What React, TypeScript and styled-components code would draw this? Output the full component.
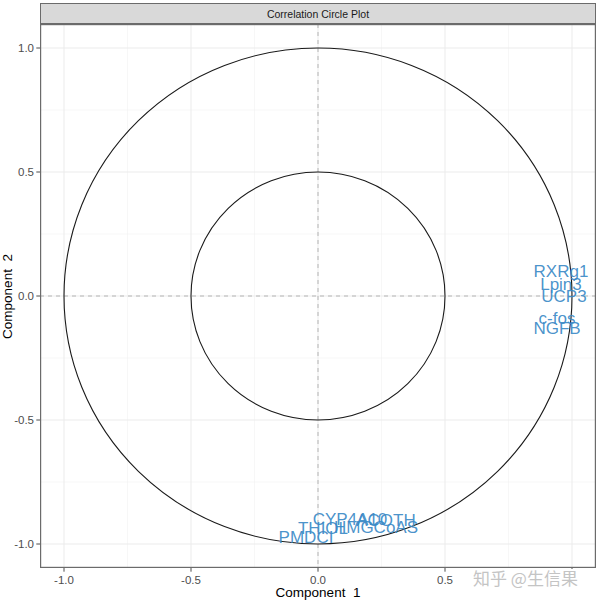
import React from "react";
import styled, { createGlobalStyle } from "styled-components";

const Global = createGlobalStyle`
  html, body { margin: 0; padding: 0; background: #ffffff; }
  body { font-family: "Liberation Sans", Arial, sans-serif; }
`;

const PANEL_W = 556;
const PANEL_H = 544;
const CX = 278;
const CY = 272;
const SX = 254;
const SY = 248;
const px = (v: number) => CX + SX * v;
const py = (v: number) => CY - SY * v;

const MAJOR = [-1, -0.5, 0, 0.5, 1];
const MINOR = [-0.75, -0.25, 0.25, 0.75];

type Label = { text: string; x: number; y: number };
const LABELS: Label[] = [
  { text: "RXRg1", x: 561, y: 271 },
  { text: "Lpin3", x: 561, y: 284 },
  { text: "UCP3", x: 564, y: 296 },
  { text: "c-fos", x: 557, y: 318 },
  { text: "NGFB", x: 557, y: 328 },
  { text: "CYP4A10", x: 350, y: 519 },
  { text: "ACOTH", x: 386, y: 520 },
  { text: "THIOL", x: 323, y: 528 },
  { text: "HMGCoAS", x: 376, y: 527 },
  { text: "PMDCI", x: 306, y: 537 },
];

const Page = styled.div`
  position: relative;
  width: 600px;
  height: 603px;
  overflow: hidden;
  background: #ffffff;
`;

const Figure = styled.div`
  display: grid;
  grid-template-columns: 40px ${PANEL_W}px;
  grid-template-rows: 21px ${PANEL_H}px 17px 16px;
  padding-top: 3px;
`;

const Strip = styled.div`
  grid-column: 2;
  grid-row: 1;
  box-sizing: border-box;
  background: #d9d9d9;
  border: 1px solid #6b6b6b;
  display: flex;
  align-items: center;
  justify-content: center;
  font-size: 10.5px;
  color: #1a1a1a;
  font-family: "Liberation Sans", Arial, sans-serif;
`;

const YAxis = styled.div`
  grid-column: 1;
  grid-row: 2;
  display: flex;
  flex-direction: row;
`;

const YTitle = styled.div`
  width: 14px;
  display: flex;
  align-items: center;
  justify-content: center;
`;

const YTitleText = styled.span`
  display: block;
  transform: rotate(-90deg);
  white-space: pre;
  font-size: 13.5px;
  color: #000000;
`;

const TickSvg = styled.svg`
  display: block;
  overflow: visible;
`;

const TickText = styled.text`
  font-family: "Liberation Sans", Arial, sans-serif;
  font-size: 11.5px;
  fill: #4d4d4d;
`;

const PanelSvg = styled.svg`
  grid-column: 2;
  grid-row: 2;
  display: block;
`;

const PointLabel = styled.text`
  font-family: "Liberation Sans", Arial, sans-serif;
  font-size: 17px;
  fill: #3a89c6;
  fill-opacity: 0.92;
`;

const XTicks = styled.div`
  grid-column: 2;
  grid-row: 3;
`;

const XTitle = styled.div`
  grid-column: 2;
  grid-row: 4;
  text-align: center;
  font-size: 13.5px;
  line-height: 15px;
  color: #000000;
  white-space: pre;
`;

const Watermark = styled.div`
  position: absolute;
  left: 470px;
  top: 569px;
  padding: 0 3px;
  background: #ffffff;
  font-family: "Noto Sans CJK SC", "Noto Sans", sans-serif;
  font-size: 17px;
  line-height: 18px;
  color: #c4c4c4;
  white-space: pre;
`;

const fmt = (v: number) => v.toFixed(1);

export default function App() {
  return (
    <Page>
      <Global />
      <Figure>
        <Strip>Correlation Circle Plot</Strip>
        <YAxis>
          <YTitle>
            <YTitleText>Component  2</YTitleText>
          </YTitle>
          <TickSvg width={26} height={PANEL_H}>
            {MAJOR.map((v) => (
              <g key={v}>
                <line x1={22.3} x2={26} y1={py(v)} y2={py(v)} stroke="#4d4d4d" strokeWidth={1} />
                <TickText x={20} y={py(v)} textAnchor="end" dominantBaseline="central">
                  {fmt(v)}
                </TickText>
              </g>
            ))}
          </TickSvg>
        </YAxis>
        <PanelSvg width={PANEL_W} height={PANEL_H} viewBox={`0 0 ${PANEL_W} ${PANEL_H}`}>
          <rect x={0} y={0} width={PANEL_W} height={PANEL_H} fill="#ffffff" />
          {MINOR.map((v) => (
            <g key={"m" + v}>
              <line x1={px(v)} x2={px(v)} y1={0} y2={PANEL_H} stroke="#f2f2f2" strokeWidth={0.6} />
              <line x1={0} x2={PANEL_W} y1={py(v)} y2={py(v)} stroke="#f2f2f2" strokeWidth={0.6} />
            </g>
          ))}
          {MAJOR.map((v) => (
            <g key={"M" + v}>
              <line x1={px(v)} x2={px(v)} y1={0} y2={PANEL_H} stroke="#ebebeb" strokeWidth={1} />
              <line x1={0} x2={PANEL_W} y1={py(v)} y2={py(v)} stroke="#ebebeb" strokeWidth={1} />
            </g>
          ))}
          <line x1={px(0)} x2={px(0)} y1={0} y2={PANEL_H} stroke="#b5b5b5" strokeWidth={1} strokeDasharray="4 4" />
          <line x1={0} x2={PANEL_W} y1={py(0)} y2={py(0)} stroke="#b5b5b5" strokeWidth={1} strokeDasharray="4 4" />
          <ellipse cx={CX} cy={CY} rx={SX} ry={SY} fill="none" stroke="#1a1a1a" strokeWidth={1.1} />
          <ellipse cx={CX} cy={CY} rx={SX / 2} ry={SY / 2} fill="none" stroke="#1a1a1a" strokeWidth={1.1} />
          {LABELS.map((l) => (
            <PointLabel
              key={l.text}
              x={l.x - 40}
              y={l.y - 24}
              textAnchor="middle"
              dominantBaseline="central"
            >
              {l.text}
            </PointLabel>
          ))}
          <rect x={0.6} y={0.6} width={PANEL_W - 1.2} height={PANEL_H - 1.2} fill="none" stroke="#6b6b6b" strokeWidth={1.2} />
        </PanelSvg>
        <XTicks>
          <TickSvg width={PANEL_W} height={17}>
            {MAJOR.map((v) => (
              <g key={v}>
                <line x1={px(v)} x2={px(v)} y1={0} y2={3.7} stroke="#4d4d4d" strokeWidth={1} />
                {v < 1 && (
                  <TickText x={px(v)} y={16} textAnchor="middle">
                    {fmt(v)}
                  </TickText>
                )}
              </g>
            ))}
          </TickSvg>
        </XTicks>
        <XTitle>Component  1</XTitle>
      </Figure>
      <Watermark>知乎 @生信果</Watermark>
    </Page>
  );
}
